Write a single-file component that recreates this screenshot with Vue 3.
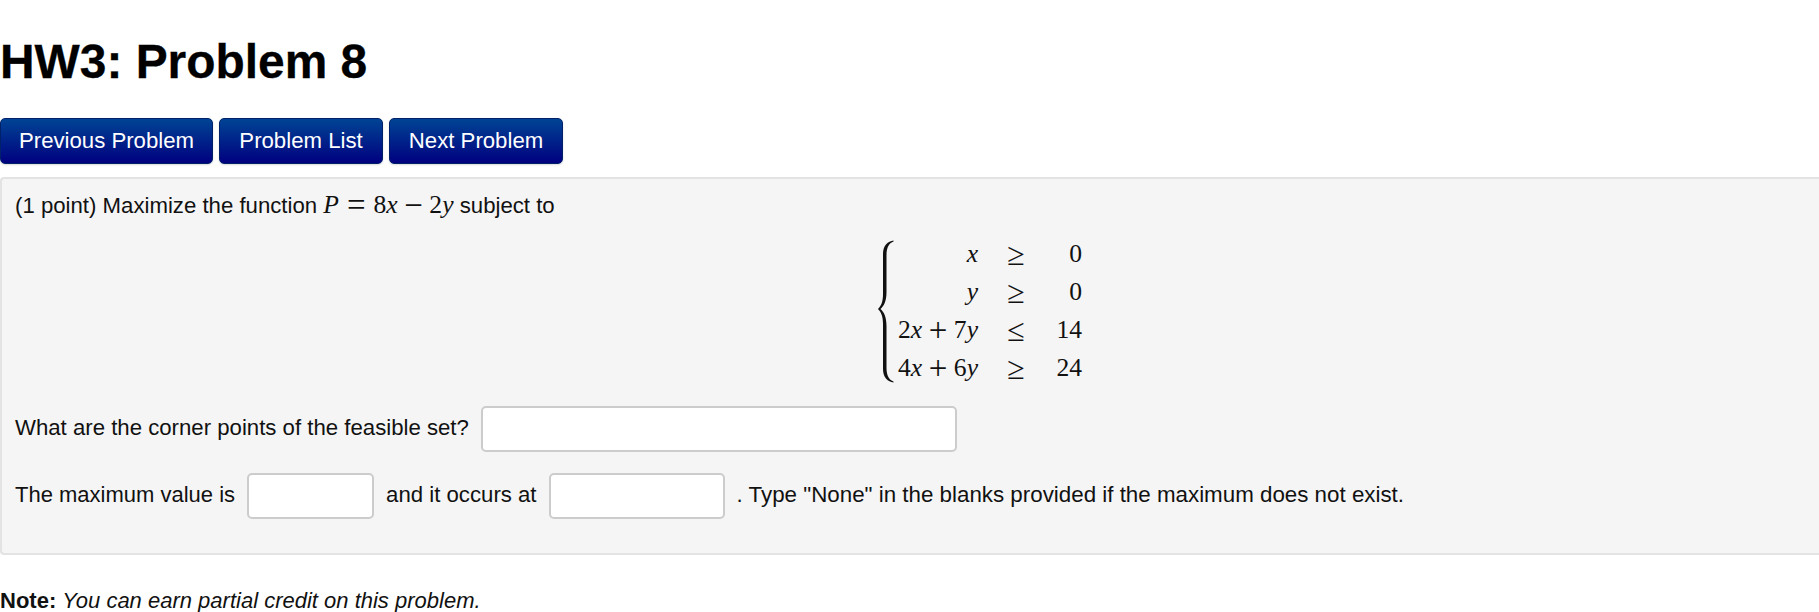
<script setup>
const rows = [
  { id: 1, a: null, v1: 'x', op: '≥', rhs: '0' },
  { id: 2, a: null, v1: 'y', op: '≥', rhs: '0' },
  { id: 3, a: '2', v1: 'x', b: '7', v2: 'y', op: '≤', rhs: '14' },
  { id: 4, a: '4', v1: 'x', b: '6', v2: 'y', op: '≥', rhs: '24' }
]
</script>

<template>
  <main class="page">
    <h1 class="title">HW3: Problem 8</h1>
    <nav class="buttons">
      <a class="btn btn-prev">Previous Problem</a>
      <a class="btn btn-list">Problem List</a>
      <a class="btn btn-next">Next Problem</a>
    </nav>
    <section class="panel">
      <p class="line first">
        (1 point) Maximize the function
        <span class="math"><i>P</i><span class="rel">=</span>8<i>x</i><span class="bin">−</span>2<i>y</i></span>
        subject to
      </p>
      <div class="display">
        <svg class="brace" width="16" height="143" viewBox="0 0 16 143">
          <path d="M15.5 0.5 C10 1.5 5 5 5 14 L5 54 C5 62 3 66 0 69 C3 72 5 76 5 84 L5 129 C5 138 10 141.5 15.5 142.5 L15.5 141.5 C11.5 140 8.5 136 8.5 128 L8.5 86 C8.5 77 6 72 2.5 69 C6 66 8.5 61 8.5 52 L8.5 15 C8.5 7 11.5 3 15.5 1.5 Z" fill="#111" />
        </svg>
        <div class="grid">
          <template v-for="r in rows" :key="r.id">
            <span class="lhs"><template v-if="r.a">{{ r.a }}</template><i>{{ r.v1 }}</i><template v-if="r.a"><span class="bin">+</span>{{ r.b }}<i>{{ r.v2 }}</i></template></span>
            <span class="op">{{ r.op }}</span>
            <span class="rhs">{{ r.rhs }}</span>
          </template>
        </div>
      </div>
      <div class="line q1">
        <span class="seg">What are the corner points of the feasible set?</span>
        <span class="input wide"></span>
      </div>
      <div class="line q2">
        <span class="seg seg-tight">The maximum value is</span>
        <span class="input small"></span>
        <span class="seg">and it occurs at</span>
        <span class="input mid"></span>
        <span class="seg seg-wide">. Type "None" in the blanks provided if the maximum does not exist.</span>
      </div>
    </section>
    <p class="note"><b>Note:</b> <i>You can earn partial credit on this problem.</i></p>
  </main>
</template>

<style>
html, body { margin: 0; background: #fff; overflow: hidden; }
</style>

<style scoped>
.page {
  width: 1819px;
  height: 612px;
  overflow: hidden;
  font-family: "Liberation Sans", Arial, sans-serif;
  font-size: 22.2px;
  color: #111;
}
.title {
  margin: 0;
  padding-top: 35px;
  font-size: 47.9px;
  line-height: 54px;
  font-weight: 700;
  color: #000;
  -webkit-text-stroke: 0.3px #000;
}
.buttons {
  display: flex;
  gap: 6px;
  margin-top: 29px;
}
.btn {
  display: block;
  height: 46px;
  box-sizing: border-box;
  line-height: 43px;
  text-align: center;
  color: #fff;
  border: 1px solid #00206a;
  border-radius: 5px;
  background: linear-gradient(#004494, #00007f);
  box-shadow: 0 1px 2px rgba(0, 0, 0, .15);
  font-size: 22.2px;
}
.btn-prev { width: 213px; }
.btn-list { width: 164px; }
.btn-next { width: 174px; }
.panel {
  margin-top: 13px;
  box-sizing: border-box;
  height: 378px;
  background: #f5f5f5;
  border: 2px solid #e3e3e3;
  border-right: 0;
  border-radius: 4px 0 0 4px;
  padding: 0 0 0 13px;
}
.line { margin: 0; }
.first { padding-top: 11px; line-height: 30px; }
.math { font-family: "Liberation Serif", serif; font-size: 25.6px; }
.bin, .rel {
  font-size: 33px;
  line-height: 0;
  vertical-align: -3px;
}
.bin { margin: 0 6.5px; }
.rel { margin: 0 8px; }
.display {
  display: flex;
  align-items: center;
  margin-top: 14px;
  margin-left: 863px;
}
.brace { flex: none; }
.grid {
  display: grid;
  grid-template-columns: 84px 76px 28px;
  grid-auto-rows: 38px;
  align-items: center;
  font-family: "Liberation Serif", serif;
  font-size: 25.6px;
  color: #111;
}
.lhs { text-align: right; white-space: pre; }
.op { text-align: center; font-size: 32px; line-height: 38px; }
.rhs { text-align: right; white-space: nowrap; }
.q1, .q2 { display: flex; align-items: center; }
.q1 { margin-top: 19px; gap: 12px; }
.q2 { margin-top: 21px; gap: 12px; }
.seg { margin-bottom: 2px; }
.seg-tight { font-size: 22px; }
.seg-wide { font-size: 22.35px; }
.input {
  display: block;
  height: 46px;
  box-sizing: border-box;
  background: #fff;
  border: 2px solid #ccc;
  border-radius: 5px;
}
.wide { width: 476px; }
.small { width: 127px; }
.mid { width: 176px; }
.note {
  margin: 37px 0 0;
  font-size: 22px;
  line-height: 18px;
  color: #111;
}
</style>
